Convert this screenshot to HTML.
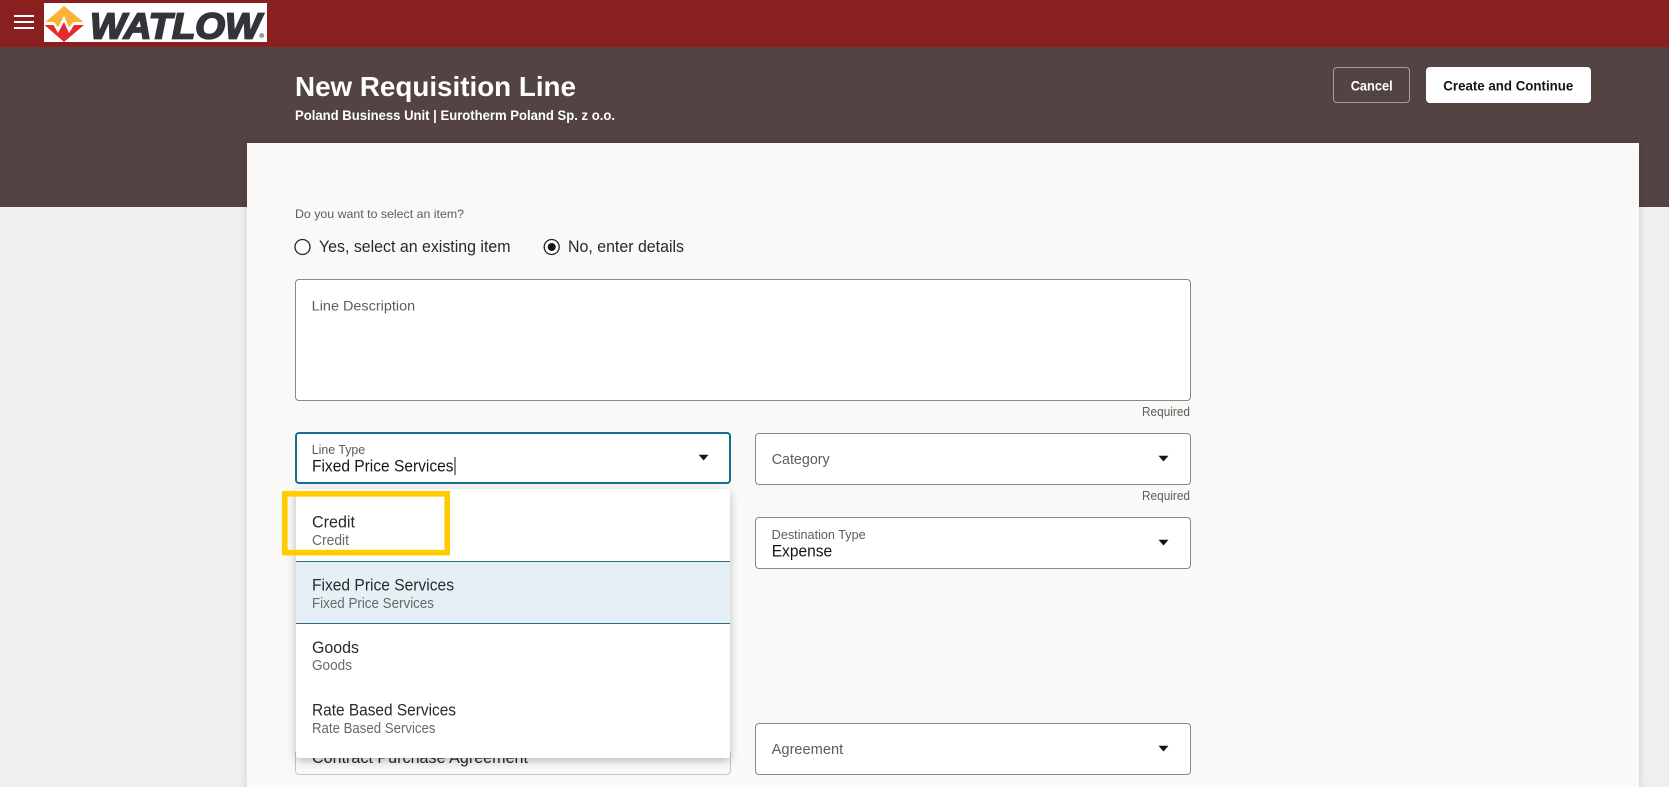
<!DOCTYPE html>
<html lang="en">
<head>
<meta charset="utf-8">
<title>New Requisition Line</title>
<style>
html,body{margin:0;padding:0;width:1669px;height:787px;overflow:hidden;background:#f1efed;font-family:"Liberation Sans",sans-serif}
div{position:absolute;box-sizing:border-box}
svg{position:absolute;left:0;top:0}
.f{background:#fff;border:1px solid #8b8885;border-radius:4px}
text{font-family:"Liberation Sans",sans-serif}
</style>
</head>
<body>
<div style="left:0;top:0;width:1669px;height:47px;background:#8a1f1f"></div>
<div style="left:0;top:47px;width:1669px;height:160px;background:#544343"></div>
<div style="left:247px;top:143px;width:1392px;height:644px;background:#faf9f7;box-shadow:0 2px 8px rgba(0,0,0,.14)"></div>
<div style="left:44px;top:3px;width:223px;height:39px;background:#fff"></div>
<div style="left:1333px;top:67px;width:77px;height:36px;border:1px solid #a89e9e;border-radius:4px"></div>
<div style="left:1426px;top:67px;width:165px;height:36px;background:#fff;border-radius:4px"></div>
<div class="f" style="left:295px;top:279px;width:896px;height:122px"></div>
<div class="f" style="left:295px;top:432px;width:436px;height:52px;border:2px solid #13708f"></div>
<div class="f" style="left:755px;top:433px;width:436px;height:52px"></div>
<div class="f" style="left:755px;top:517px;width:436px;height:52px"></div>
<div class="f" style="left:755px;top:723px;width:436px;height:52px"></div>
<div style="left:295px;top:752px;width:436px;height:23px;background:#faf9f7;border:1px solid #c9c7c4;border-top:0;border-radius:0 0 4px 4px"></div>

<svg width="1669" height="787" viewBox="0 0 1669 787" style="z-index:1">
  <g fill="#fff">
    <rect x="14" y="15" width="20" height="2"/>
    <rect x="14" y="21" width="20" height="2"/>
    <rect x="14" y="27" width="20" height="2"/>
  </g>
  <path d="M64 6L83.500 22H73.500L69 27.500L64 15.500L58 27.500L54 22H45.500Z" fill="#f9b233"/>
  <path d="M44.500 25H53.500L58 33L64 22L69 33L74 25H84L64 42Z" fill="#e52a2a"/>
  <text x="90" y="38.500" font-size="36" font-weight="700" font-style="italic" fill="#32343a" stroke="#32343a" stroke-width="1.800" textLength="171" lengthAdjust="spacingAndGlyphs">WATLOW</text>
  <circle cx="261.700" cy="35.500" r="2.500" fill="#9a9a9a"/>
  <text x="295" y="96" font-size="28" font-weight="700" fill="#fff" textLength="281" lengthAdjust="spacingAndGlyphs">New Requisition Line</text>
  <text x="295" y="120" font-size="13.500" font-weight="700" fill="#fff" textLength="320" lengthAdjust="spacingAndGlyphs">Poland Business Unit | Eurotherm Poland Sp. z o.o.</text>
  <text x="1350.700" y="90.500" font-size="14" font-weight="700" fill="#fff" textLength="42" lengthAdjust="spacingAndGlyphs">Cancel</text>
  <text x="1443.300" y="90.500" font-size="14" font-weight="700" fill="#161513" textLength="130" lengthAdjust="spacingAndGlyphs">Create and Continue</text>
  <text x="295" y="218" font-size="12" fill="#5f5c59" textLength="169" lengthAdjust="spacingAndGlyphs">Do you want to select an item?</text>
  <circle cx="302.500" cy="247" r="7.500" fill="#fff" stroke="#262422" stroke-width="1.300"/>
  <text x="319" y="252.200" font-size="17" fill="#2b2927" textLength="191.500" lengthAdjust="spacingAndGlyphs">Yes, select an existing item</text>
  <circle cx="551.700" cy="247" r="7.500" fill="#fff" stroke="#262422" stroke-width="1.300"/>
  <circle cx="551.700" cy="247" r="4" fill="#161513"/>
  <text x="568" y="252.200" font-size="17" fill="#2b2927" textLength="116" lengthAdjust="spacingAndGlyphs">No, enter details</text>
  <text x="311.700" y="310.700" font-size="14" font-weight="400" fill="#5f5c59" textLength="103.500" lengthAdjust="spacingAndGlyphs">Line Description</text>
  <text x="1142" y="416" font-size="12.500" fill="#5f5c59" textLength="48" lengthAdjust="spacingAndGlyphs">Required</text>
  <text x="311.700" y="454" font-size="12.500" fill="#5f5c59" textLength="53.500" lengthAdjust="spacingAndGlyphs">Line Type</text>
  <text x="312" y="471.300" font-size="17" fill="#161513" textLength="141.500" lengthAdjust="spacingAndGlyphs">Fixed Price Services</text>
  <rect x="454.500" y="457" width="1" height="18" fill="#161513"/>
  <path d="M698.700 454.700H708.500L703.600 460.500Z" fill="#161513"/>
  <text x="771.700" y="464" font-size="14.500" fill="#5f5c59" textLength="58" lengthAdjust="spacingAndGlyphs">Category</text>
  <path d="M1158.500 455.700H1168.500L1163.500 461.500Z" fill="#161513"/>
  <text x="1142" y="500" font-size="12.500" fill="#5f5c59" textLength="48" lengthAdjust="spacingAndGlyphs">Required</text>
  <text x="771.700" y="539" font-size="12.500" fill="#5f5c59" textLength="94" lengthAdjust="spacingAndGlyphs">Destination Type</text>
  <text x="771.700" y="556.500" font-size="17" fill="#161513" textLength="60.500" lengthAdjust="spacingAndGlyphs">Expense</text>
  <path d="M1158.500 539.700H1168.500L1163.500 545.500Z" fill="#161513"/>
  <text x="771.700" y="754" font-size="14.500" fill="#5f5c59" textLength="71.500" lengthAdjust="spacingAndGlyphs">Agreement</text>
  <path d="M1158.500 745.700H1168.500L1163.500 751.500Z" fill="#161513"/>
  <text x="312" y="763" font-size="17" fill="#2b2927" textLength="216" lengthAdjust="spacingAndGlyphs">Contract Purchase Agreement</text>
</svg>

<div style="z-index:2;left:296px;top:489px;width:434px;height:269px;background:#fff;border-radius:3px;box-shadow:0 3px 9px rgba(0,0,0,.25)"></div>
<div style="z-index:2;left:296px;top:561px;width:434px;height:63px;background:#e4f0f6;border-top:1px solid #2c6f8a;border-bottom:1px solid #2c6f8a"></div>

<svg width="1669" height="787" viewBox="0 0 1669 787" style="z-index:3">
  <text x="312" y="527.500" font-size="17" fill="#2b2927" textLength="43" lengthAdjust="spacingAndGlyphs">Credit</text>
  <text x="312" y="545" font-size="14.500" fill="#6b6865" textLength="37" lengthAdjust="spacingAndGlyphs">Credit</text>
  <text x="312" y="590.500" font-size="17" fill="#2b2927" textLength="142" lengthAdjust="spacingAndGlyphs">Fixed Price Services</text>
  <text x="312" y="608" font-size="14.500" fill="#6b6865" textLength="122" lengthAdjust="spacingAndGlyphs">Fixed Price Services</text>
  <text x="312" y="653" font-size="17" fill="#2b2927" textLength="47" lengthAdjust="spacingAndGlyphs">Goods</text>
  <text x="312" y="670" font-size="14.500" fill="#6b6865" textLength="40" lengthAdjust="spacingAndGlyphs">Goods</text>
  <text x="312" y="715.500" font-size="17" fill="#2b2927" textLength="144" lengthAdjust="spacingAndGlyphs">Rate Based Services</text>
  <text x="312" y="733" font-size="14.500" fill="#6b6865" textLength="123.500" lengthAdjust="spacingAndGlyphs">Rate Based Services</text>
  <rect x="284.800" y="493.800" width="162.400" height="58.800" fill="none" stroke="#ffcc00" stroke-width="5.600"/>
</svg>
</body>
</html>
